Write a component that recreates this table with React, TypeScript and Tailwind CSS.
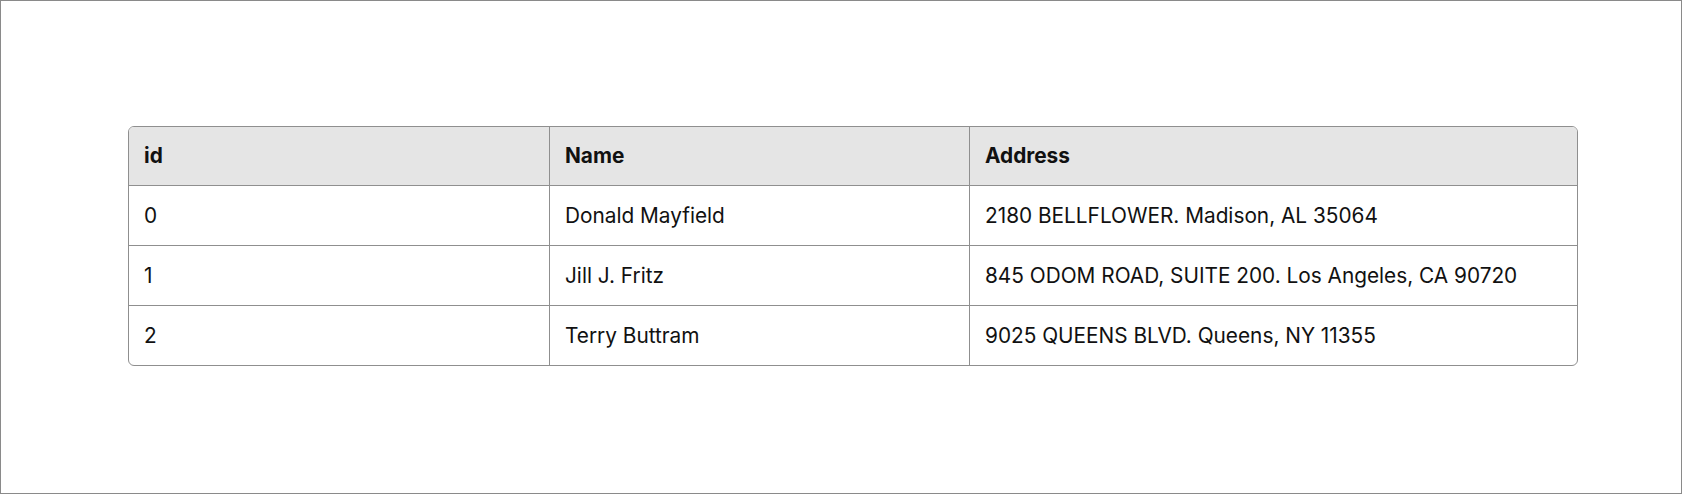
import React from "react";

const rows = [
  { id: "0", name: "Donald Mayfield", address: "2180 BELLFLOWER. Madison, AL 35064" },
  { id: "1", name: "Jill J. Fritz", address: "845 ODOM ROAD, SUITE 200. Los Angeles, CA 90720" },
  { id: "2", name: "Terry Buttram", address: "9025 QUEENS BLVD. Queens, NY 11355" },
];

export default function App() {
  return (
    <div
      className="w-[1682px] h-[494px] border border-[#8a8a8a] bg-white pl-[127px] pt-[125px]"
      style={{ fontFamily: "Inter, 'Noto Sans', sans-serif" }}
    >
      <div className="w-[1450px] border border-[#8f8f8f] rounded-[6px] overflow-hidden text-[20.8px] text-[#111111]">
        <div className="grid grid-cols-[420px_420px_1fr] h-[58px] bg-[#e5e5e5] font-bold">
          <div className="flex items-center px-[15px]">id</div>
          <div className="flex items-center px-[15px] border-l border-[#8f8f8f]">Name</div>
          <div className="flex items-center px-[15px] border-l border-[#8f8f8f]">Address</div>
        </div>
        {rows.map((r) => (
          <div key={r.id} className="grid grid-cols-[420px_420px_1fr] h-[60px] border-t border-[#8f8f8f]">
            <div className="flex items-center px-[15px]">{r.id}</div>
            <div className="flex items-center px-[15px] border-l border-[#8f8f8f]">{r.name}</div>
            <div className="flex items-center px-[15px] border-l border-[#8f8f8f]">{r.address}</div>
          </div>
        ))}
      </div>
    </div>
  );
}
